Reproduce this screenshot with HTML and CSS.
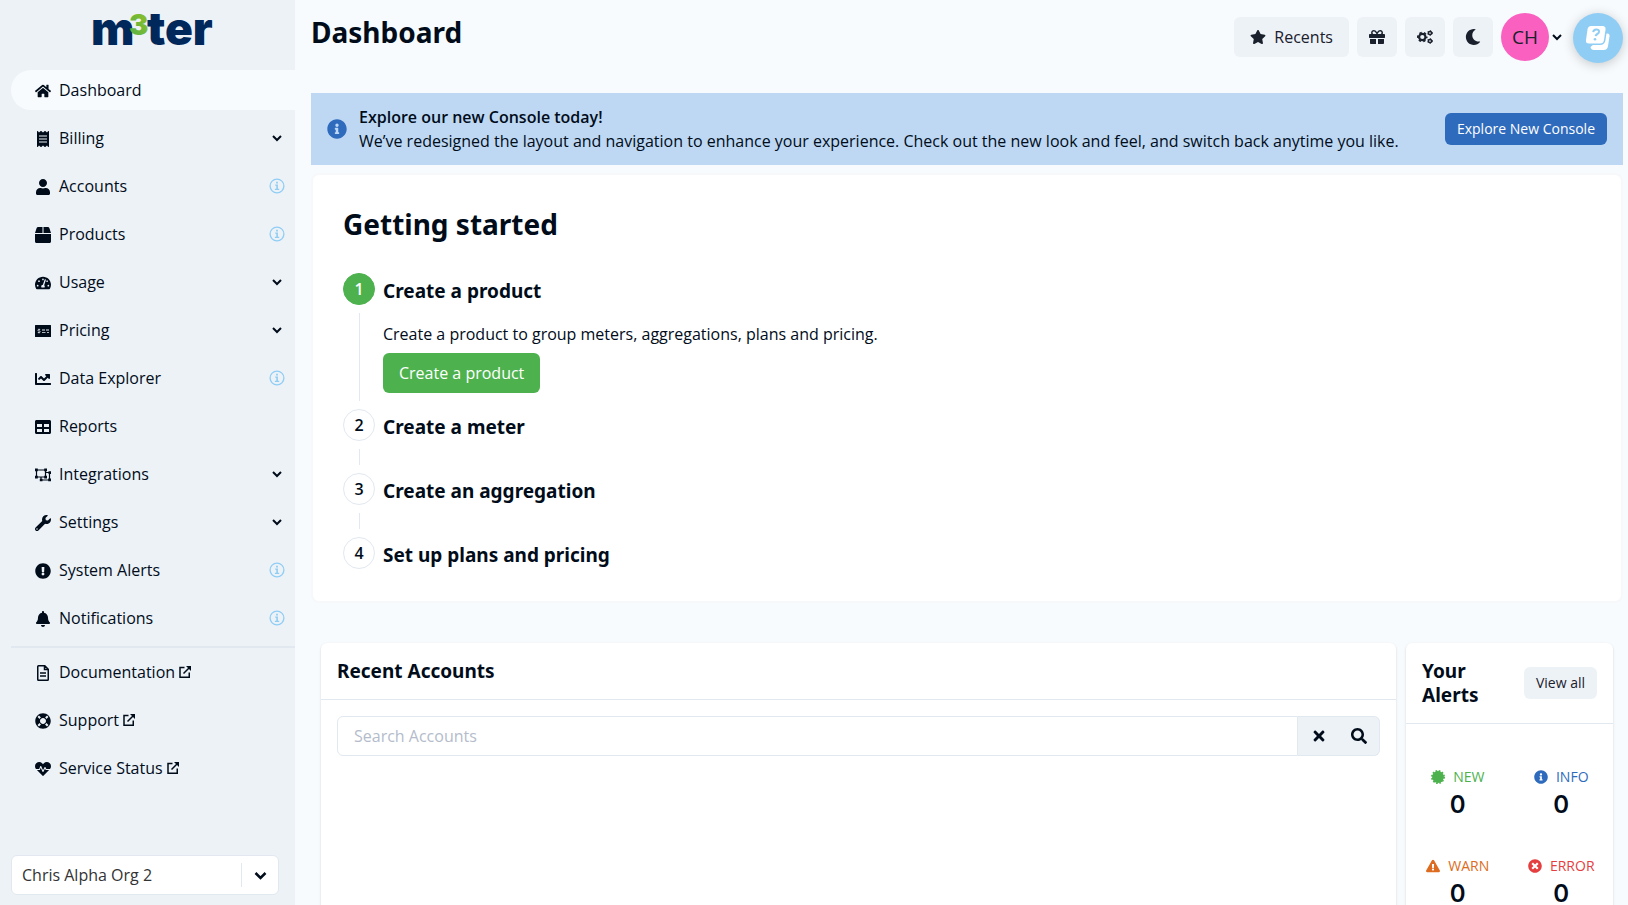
FILE: index.html
```html
<!DOCTYPE html>
<html lang="en">
<head>
<meta charset="utf-8">
<title>Dashboard</title>
<link rel="stylesheet" href="styles.css">
</head>
<body>
<svg class="sprite" aria-hidden="true">
  <symbol id="home" viewBox="0 0 576 512"><path d="M280.37 148.26L96 300.11V464a16 16 0 0 0 16 16l112.06-.29a16 16 0 0 0 15.92-16V368a16 16 0 0 1 16-16h64a16 16 0 0 1 16 16v95.64a16 16 0 0 0 16 16.05L464 480a16 16 0 0 0 16-16V300L295.67 148.26a12.19 12.19 0 0 0-15.3 0zM571.6 251.47L488 182.56V44.05a12 12 0 0 0-12-12h-56a12 12 0 0 0-12 12v72.61L318.47 43a48 48 0 0 0-61 0L4.34 251.47a12 12 0 0 0-1.6 16.9l25.5 31A12 12 0 0 0 45.15 301l235.22-193.74a12.19 12.19 0 0 1 15.3 0L530.9 301a12 12 0 0 0 16.9-1.6l25.5-31a12 12 0 0 0-1.7-16.93z"/></symbol>
  <symbol id="receipt" viewBox="0 0 384 512"><path d="M358.4 3.2L320 48 265.6 3.2a15.9 15.9 0 0 0-19.2 0L192 48 137.6 3.2a15.9 15.9 0 0 0-19.2 0L64 48 25.6 3.2C15-4.7 0 2.8 0 16v480c0 13.2 15 20.7 25.6 12.8L64 464l54.4 44.8a15.9 15.9 0 0 0 19.2 0L192 464l54.4 44.8a15.9 15.9 0 0 0 19.2 0L320 464l38.4 44.8c10.5 7.9 25.6.4 25.6-12.8V16c0-13.2-15-20.7-25.6-12.8zM320 360c0 4.4-3.6 8-8 8H72c-4.4 0-8-3.6-8-8v-16c0-4.4 3.6-8 8-8h240c4.4 0 8 3.6 8 8v16zm0-96c0 4.4-3.6 8-8 8H72c-4.4 0-8-3.6-8-8v-16c0-4.4 3.6-8 8-8h240c4.4 0 8 3.6 8 8v16zm0-96c0 4.4-3.6 8-8 8H72c-4.4 0-8-3.6-8-8v-16c0-4.4 3.6-8 8-8h240c4.4 0 8 3.6 8 8v16z"/></symbol>
  <symbol id="user" viewBox="0 0 448 512"><path d="M224 256c70.7 0 128-57.3 128-128S294.7 0 224 0 96 57.3 96 128s57.3 128 128 128zm89.6 32h-16.7c-22.2 10.2-46.9 16-72.9 16s-50.6-5.8-72.9-16h-16.7C60.2 288 0 348.2 0 422.4V464c0 26.5 21.5 48 48 48h352c26.5 0 48-21.5 48-48v-41.6c0-74.2-60.2-134.4-134.4-134.4z"/></symbol>
  <symbol id="box" viewBox="0 0 512 512"><path d="M509.5 184.6L458.9 32.8C452.4 13.2 434.1 0 413.4 0H272v192h238.7c-.4-2.5-.4-5-1.2-7.4zM240 0H98.6c-20.7 0-39 13.2-45.5 32.8L2.5 184.6c-.8 2.4-.8 4.9-1.2 7.4H240V0zM0 224v240c0 26.5 21.5 48 48 48h416c26.5 0 48-21.5 48-48V224H0z"/></symbol>
  <symbol id="gauge" viewBox="0 0 576 512"><path d="M288 32C128.94 32 0 160.94 0 320c0 52.8 14.25 102.26 39.06 144.8 5.61 9.62 16.3 15.2 27.44 15.2h443c11.14 0 21.83-5.58 27.44-15.2C561.75 422.26 576 372.8 576 320c0-159.06-128.94-288-288-288zm0 64c14.71 0 26.58 10.13 30.32 23.65-1.11 2.26-2.64 4.23-3.45 6.67l-9.22 27.67c-5.13 3.49-10.97 6.01-17.64 6.01-17.67 0-32-14.33-32-32S270.33 96 288 96zM96 384c-17.67 0-32-14.33-32-32s14.33-32 32-32 32 14.33 32 32-14.33 32-32 32zm48-160c-17.67 0-32-14.33-32-32s14.33-32 32-32 32 14.33 32 32-14.33 32-32 32zm246.77-72.41l-61.33 184C343.13 347.33 352 364.54 352 384c0 11.72-3.38 22.55-8.88 32H232.88c-5.5-9.45-8.88-20.28-8.88-32 0-33.94 26.5-61.43 59.9-63.59l61.34-184.01c4.17-12.56 17.73-19.45 30.36-15.17 12.57 4.19 19.35 17.79 15.17 30.36zm14.66 57.2l15.52-46.55c3.47-1.29 7.13-2.23 11.05-2.23 17.67 0 32 14.33 32 32s-14.33 32-32 32c-11.38-.01-20.89-6.28-26.57-15.22zM480 384c-17.67 0-32-14.33-32-32s14.33-32 32-32 32 14.33 32 32-14.33 32-32 32z"/></symbol>
  <symbol id="money" viewBox="0 0 16 16"><path fill-rule="evenodd" d="M.5 2h15q.5 0 .5.5v11q0 .5-.5.500H.5q-.5 0-.5-.5v-11q0-.5.5-.5zM7 6.500v1h3v-1zM11 6.500v1h3v-1zM7 9v.8h3.500V9zM12 9v.8h2V9z"/><path d="M5.200 6.600H3.600q-.7 0-.7.7t.7.700h.9q.7 0 .7.750t-.7.750H2.800M4 5.700v.900M4 9.500v.900" fill="none" stroke="#edf2f7" stroke-width=".8"/></symbol>
  <symbol id="chart" viewBox="0 0 512 512"><path d="M496 384H64V80c0-8.84-7.16-16-16-16H16C7.16 64 0 71.16 0 80v336c0 17.67 14.33 32 32 32h464c8.84 0 16-7.16 16-16v-32c0-8.84-7.16-16-16-16zM464 96H345.94c-21.38 0-32.09 25.85-16.97 40.97l32.4 32.4L288 242.75l-73.37-73.37c-12.5-12.5-32.76-12.5-45.25 0l-68.69 68.69c-6.25 6.25-6.25 16.38 0 22.63l22.62 22.62c6.25 6.25 16.38 6.25 22.63 0L192 237.25l73.37 73.37c12.5 12.5 32.76 12.5 45.25 0l96-96 32.4 32.4c15.12 15.12 40.97 4.41 40.97-16.97V112c.01-8.84-7.15-16-15.99-16z"/></symbol>
  <symbol id="table" viewBox="0 0 512 512"><path d="M464 32H48C21.49 32 0 53.49 0 80v352c0 26.51 21.49 48 48 48h416c26.51 0 48-21.49 48-48V80c0-26.51-21.49-48-48-48zM224 416H64v-96h160v96zm0-160H64v-96h160v96zm224 160H288v-96h160v96zm0-160H288v-96h160v96z"/></symbol>
  <symbol id="ungroup" viewBox="0 0 16 16"><path d="M1.500 3h9v7h-9zM11 5.500h3.500v7.500H6v-3" fill="none" stroke="currentColor" stroke-width="1.200"/><path d="M0 1.500h2.800v2.800H0zM9.200 1.500H12v2.800H9.200zM0 8.700h2.800v2.800H0zM9.200 8.700H12v2.800H9.200zM13.500 4.200H16V7h-2.500zM13.200 11.500H16v2.800h-2.800zM4.800 11.700h2.700v2.600H4.800z"/></symbol>
  <symbol id="wrench" viewBox="0 0 512 512"><path d="M507.73 109.1c-2.24-9.03-13.54-12.09-20.12-5.51l-74.36 74.36-67.88-11.31-11.31-67.88 74.36-74.36c6.62-6.62 3.43-17.9-5.66-20.16-47.38-11.74-99.55.91-136.58 37.93-39.64 39.64-50.55 97.1-34.05 147.2L18.74 402.76c-24.99 24.99-24.99 65.51 0 90.5 24.99 24.99 65.51 24.99 90.5 0l213.21-213.21c50.12 16.71 107.47 5.68 147.37-34.22 37.07-37.07 49.7-89.32 37.91-136.73zM64 472c-13.25 0-24-10.75-24-24 0-13.26 10.75-24 24-24s24 10.74 24 24c0 13.25-10.75 24-24 24z"/></symbol>
  <symbol id="alert" viewBox="0 0 512 512"><path d="M504 256c0 136.997-111.043 248-248 248S8 392.997 8 256C8 119.083 119.043 8 256 8s248 111.083 248 248zm-248 50c-25.405 0-46 20.595-46 46s20.595 46 46 46 46-20.595 46-46-20.595-46-46-46zm-43.673-165.346l7.418 136c.347 6.364 5.609 11.346 11.982 11.346h48.546c6.373 0 11.635-4.982 11.982-11.346l7.418-136c.375-6.874-5.098-12.654-11.982-12.654h-63.383c-6.884 0-12.356 5.78-11.981 12.654z"/></symbol>
  <symbol id="bell" viewBox="0 0 448 512"><path d="M224 512c35.32 0 63.97-28.65 63.97-64H160.03c0 35.35 28.65 64 63.97 64zm215.39-149.71c-19.32-20.76-55.47-51.99-55.47-154.29 0-77.7-54.48-139.9-127.94-155.16V32c0-17.67-14.32-32-31.98-32s-31.98 14.33-31.98 32v20.84C118.56 68.1 64.08 130.3 64.08 208c0 102.3-36.15 133.53-55.47 154.29-6 6.45-8.66 14.16-8.61 21.71.11 16.4 12.98 32 32.1 32h383.8c19.12 0 32-15.6 32.1-32 .05-7.55-2.61-15.27-8.61-21.71z"/></symbol>
  <symbol id="doc" viewBox="0 0 12 16"><path d="M1.500.75h6.300l3.450 3.450v10.300q0 .75-.75.750h-9q-.75 0-.75-.75V1.500q0-.75.750-.75zM7.500.75V4.500h3.750M3 8.100h6M3 11.100h6" fill="none" stroke="currentColor" stroke-width="1.500"/></symbol>
  <symbol id="ring" viewBox="0 0 512 512"><path d="M256 8C119.033 8 8 119.033 8 256s111.033 248 248 248 248-111.033 248-248S392.967 8 256 8zm173.696 119.559l-63.399 63.399c-10.987-18.559-26.67-34.252-45.255-45.255l63.399-63.399a218.396 218.396 0 0 1 45.255 45.255zM256 352c-53.019 0-96-42.981-96-96s42.981-96 96-96 96 42.981 96 96-42.981 96-96 96zM127.559 82.304l63.399 63.399c-18.559 10.987-34.252 26.67-45.255 45.255l-63.399-63.399a218.372 218.372 0 0 1 45.255-45.255zM82.304 384.441l63.399-63.399c10.987 18.559 26.67 34.252 45.255 45.255l-63.399 63.399a218.396 218.396 0 0 1-45.255-45.255zm302.137 45.255l-63.399-63.399c18.559-10.987 34.252-26.67 45.255-45.255l63.399 63.399a218.403 218.403 0 0 1-45.255 45.255z"/></symbol>
  <symbol id="heart" viewBox="0 0 512 512"><path d="M320.200 243.800l-49.700 99.400c-6 12.100-23.400 11.700-28.900-.6l-56.900-126.300-30 71.700H60.600l182.500 186.500c7.100 7.300 18.600 7.300 25.700 0L451.400 288H342.300l-22.100-44.200zM473.700 73.900l-2.400-2.500c-51.500-52.600-135.800-52.600-187.400 0L256 100l-27.900-28.500c-51.500-52.700-135.900-52.700-187.400 0l-2.400 2.400C-10.400 123.700-12.500 203 31 256h102.400l35.900-86.200c5.400-12.900 23.600-13.100 29.300-.4l58.200 129.300 49-97.900c5.900-11.800 22.700-11.800 28.600 0l27.600 55.200H481c43.500-53 41.400-132.300-7.300-182.100z"/></symbol>
  <symbol id="star" viewBox="0 0 576 512"><path d="M259.300 17.800L194 150.200 47.900 171.500c-26.200 3.800-36.700 36.100-17.700 54.600l105.700 103-25 145.500c-4.500 26.300 23.200 46 46.400 33.700L288 439.600l130.700 68.700c23.200 12.200 50.900-7.400 46.400-33.700l-25-145.500 105.700-103c19-18.500 8.500-50.800-17.700-54.600L382 150.200 316.700 17.800c-11.700-23.600-45.600-23.900-57.400 0z"/></symbol>
  <symbol id="gift" viewBox="0 0 512 512"><path d="M32 448c0 17.700 14.300 32 32 32h160V320H32v128zm256 32h160c17.700 0 32-14.300 32-32V320H288v160zm192-320h-42.100c6.200-12.100 10.100-25.500 10.100-40 0-48.500-39.500-88-88-88-41.600 0-68.500 21.300-103 68.300-34.500-47-61.400-68.300-103-68.300-48.500 0-88 39.500-88 88 0 14.500 3.800 27.900 10.100 40H32c-17.700 0-32 14.300-32 32v80c0 8.800 7.200 16 16 16h480c8.800 0 16-7.200 16-16v-80c0-17.700-14.300-32-32-32zm-326.100 0c-22.100 0-40-17.900-40-40s17.900-40 40-40c19.900 0 34.600 3.300 86.100 80h-86.100zm206.100 0h-86.100c51.400-76.500 65.700-80 86.100-80 22.100 0 40 17.900 40 40s-17.900 40-40 40z"/></symbol>
  <symbol id="cogs" viewBox="0 0 16 16"><g fill="none" stroke="currentColor"><circle cx="5.300" cy="8" r="3.200" stroke-width="2.200"/><circle cx="5.300" cy="8" r="4.500" stroke-width="1.600" stroke-dasharray="2.400 2.312" stroke-dashoffset="1.200"/><circle cx="13" cy="4" r="1.600" stroke-width="1.500"/><circle cx="13" cy="4" r="2.400" stroke-width="1" stroke-dasharray="1.250 1.263"/><circle cx="13" cy="12" r="1.600" stroke-width="1.500"/><circle cx="13" cy="12" r="2.400" stroke-width="1" stroke-dasharray="1.250 1.263"/></g></symbol>
  <symbol id="moon" viewBox="0 0 512 512"><path d="M283.211 512c78.962 0 151.079-35.925 198.857-94.792 7.068-8.708-.639-21.430-11.562-19.350-124.203 23.654-238.262-71.576-238.262-196.954 0-72.222 38.662-138.635 101.498-174.394 9.686-5.512 7.250-20.197-3.756-22.230A258.156 258.156 0 0 0 283.211 0c-141.309 0-256 114.511-256 256 0 141.309 114.511 256 256 256z"/></symbol>
  <symbol id="times" viewBox="0 0 352 512"><path d="M242.720 256l100.070-100.070c12.280-12.280 12.280-32.190 0-44.480l-22.240-22.240c-12.280-12.280-32.190-12.280-44.480 0L176 189.280 75.930 89.210c-12.280-12.280-32.190-12.280-44.480 0L9.210 111.450c-12.280 12.280-12.280 32.190 0 44.480L109.280 256 9.210 356.070c-12.280 12.280-12.280 32.190 0 44.480l22.240 22.240c12.280 12.280 32.200 12.280 44.480 0L176 322.720l100.070 100.070c12.280 12.280 32.200 12.280 44.480 0l22.240-22.240c12.280-12.280 12.280-32.190 0-44.480L242.720 256z"/></symbol>
  <symbol id="search" viewBox="0 0 512 512"><path d="M505 442.700L405.300 343c-4.500-4.500-10.600-7-17-7H372c27.600-35.300 44-79.700 44-128C416 93.100 322.900 0 208 0S0 93.100 0 208s93.100 208 208 208c48.300 0 92.700-16.400 128-44v16.300c0 6.400 2.500 12.500 7 17l99.700 99.700c9.400 9.400 24.600 9.400 33.900 0l28.300-28.300c9.400-9.400 9.400-24.600.1-34zM208 336c-70.700 0-128-57.200-128-128 0-70.700 57.200-128 128-128 70.700 0 128 57.200 128 128 0 70.700-57.200 128-128 128z"/></symbol>
  <symbol id="info" viewBox="0 0 512 512"><path d="M256 8C119.043 8 8 119.083 8 256c0 136.997 111.043 248 248 248s248-111.003 248-248C504 119.083 392.957 8 256 8zm0 110c23.196 0 42 18.804 42 42s-18.804 42-42 42-42-18.804-42-42 18.804-42 42-42zm56 254c0 6.627-5.373 12-12 12h-88c-6.627 0-12-5.373-12-12v-24c0-6.627 5.373-12 12-12h12v-64h-12c-6.627 0-12-5.373-12-12v-24c0-6.627 5.373-12 12-12h64c6.627 0 12 5.373 12 12v100h12c6.627 0 12 5.373 12 12v24z"/></symbol>
  <symbol id="warn" viewBox="0 0 576 512"><path d="M569.517 440.013C587.975 472.007 564.806 512 527.940 512H48.054c-36.937 0-59.999-40.055-41.577-71.987L246.423 23.985c18.467-32.009 64.720-31.951 83.154 0l239.940 416.028zM288 354c-25.405 0-46 20.595-46 46s20.595 46 46 46 46-20.595 46-46-20.595-46-46-46zm-43.673-165.346l7.418 136c.347 6.364 5.609 11.346 11.982 11.346h48.546c6.373 0 11.635-4.982 11.982-11.346l7.418-136c.375-6.874-5.098-12.654-11.982-12.654h-63.383c-6.884 0-12.356 5.780-11.981 12.654z"/></symbol>
  <symbol id="error" viewBox="0 0 512 512"><path d="M256 8C119 8 8 119 8 256s111 248 248 248 248-111 248-248S393 8 256 8zm121.600 313.100c4.700 4.700 4.700 12.300 0 17L338 377.600c-4.700 4.700-12.300 4.700-17 0L256 312l-65.100 65.600c-4.700 4.700-12.300 4.700-17 0L134.400 338c-4.700-4.700-4.700-12.300 0-17l65.600-65-65.600-65.100c-4.700-4.700-4.700-12.300 0-17l39.600-39.600c4.700-4.700 12.300-4.700 17 0l65 65.700 65.100-65.600c4.700-4.700 12.300-4.700 17 0l39.600 39.600c4.700 4.700 4.700 12.300 0 17L312 256l65.600 65.100z"/></symbol>
  <symbol id="badge" viewBox="0 0 16 16"><circle cx="8" cy="8" r="6.800"/><circle cx="8" cy="8" r="7" fill="none" stroke="currentColor" stroke-width="2" stroke-dasharray="1.900 1.765"/></symbol>
  <symbol id="down" viewBox="0 0 12 12"><path d="M2 4l4 4 4-4" fill="none" stroke="currentColor" stroke-width="2"/></symbol>
  <symbol id="hint" viewBox="0 0 16 16"><circle cx="8" cy="8" r="6.900" fill="none" stroke="currentColor" stroke-width="1.300"/><path d="M7.100 3.700h1.800v1.800H7.100zM6.200 6.500h2.700v4.300h1.300V12H5.900v-1.200h1.400V7.700H6.200z"/></symbol>
  <symbol id="ext" viewBox="0 0 12 12"><path d="M5.500 1.500H1v9.750h9.250V6.500M4.500 7.500l6-6" fill="none" stroke="currentColor" stroke-width="1.500"/><path d="M7 0h5v5z"/></symbol>
</svg>

<div class="app">
  <aside class="sidebar">
    <a class="logo" href="#" aria-label="m3ter">
      <svg width="124" height="70" viewBox="0 0 124 70">
        <defs><linearGradient id="leaf" x1="0" y1="1" x2="1" y2="0"><stop offset="0" stop-color="#4caf50"/><stop offset="1" stop-color="#97c11f"/></linearGradient></defs>
        <g class="logo-text">
          <text x="0" y="45" font-size="46" fill="#00285a">m</text>
          <text x="56" y="45" font-size="46" fill="#00285a">ter</text>
          <text x="38" y="35" font-size="29" fill="url(#leaf)">3</text>
        </g>
      </svg>
    </a>
    <nav class="nav">
      <a class="nav-item active" href="#"><svg class="icon"><use href="#home"/></svg>Dashboard</a>
      <a class="nav-item" href="#"><svg class="icon"><use href="#receipt"/></svg>Billing<svg class="end chevron"><use href="#down"/></svg></a>
      <a class="nav-item" href="#"><svg class="icon"><use href="#user"/></svg>Accounts<svg class="end hint"><use href="#hint"/></svg></a>
      <a class="nav-item" href="#"><svg class="icon"><use href="#box"/></svg>Products<svg class="end hint"><use href="#hint"/></svg></a>
      <a class="nav-item" href="#"><svg class="icon"><use href="#gauge"/></svg>Usage<svg class="end chevron"><use href="#down"/></svg></a>
      <a class="nav-item" href="#"><svg class="icon"><use href="#money"/></svg>Pricing<svg class="end chevron"><use href="#down"/></svg></a>
      <a class="nav-item" href="#"><svg class="icon"><use href="#chart"/></svg>Data Explorer<svg class="end hint"><use href="#hint"/></svg></a>
      <a class="nav-item" href="#"><svg class="icon"><use href="#table"/></svg>Reports</a>
      <a class="nav-item" href="#"><svg class="icon"><use href="#ungroup"/></svg>Integrations<svg class="end chevron"><use href="#down"/></svg></a>
      <a class="nav-item" href="#"><svg class="icon"><use href="#wrench"/></svg>Settings<svg class="end chevron"><use href="#down"/></svg></a>
      <a class="nav-item" href="#"><svg class="icon"><use href="#alert"/></svg>System Alerts<svg class="end hint"><use href="#hint"/></svg></a>
      <a class="nav-item" href="#"><svg class="icon"><use href="#bell"/></svg>Notifications<svg class="end hint"><use href="#hint"/></svg></a>
    </nav>
    <nav class="nav nav-links">
      <a class="nav-item" href="#"><svg class="icon"><use href="#doc"/></svg><span>Documentation <svg class="ext"><use href="#ext"/></svg></span></a>
      <a class="nav-item" href="#"><svg class="icon"><use href="#ring"/></svg><span>Support <svg class="ext"><use href="#ext"/></svg></span></a>
      <a class="nav-item" href="#"><svg class="icon"><use href="#heart"/></svg><span>Service Status <svg class="ext"><use href="#ext"/></svg></span></a>
    </nav>
    <div class="org">
      <select class="org-select" aria-label="Organization"><option>Chris Alpha Org 2</option></select>
      <span class="org-mark"><svg><use href="#down"/></svg></span>
    </div>
  </aside>

  <main class="main">
    <header class="header">
      <h1 class="title">Dashboard</h1>
      <div class="actions">
        <button class="btn recents" type="button"><svg class="icon"><use href="#star"/></svg>Recents</button>
        <button class="btn square" type="button" aria-label="What's new"><svg class="icon"><use href="#gift"/></svg></button>
        <button class="btn square" type="button" aria-label="Preferences"><svg class="icon"><use href="#cogs"/></svg></button>
        <button class="btn square" type="button" aria-label="Dark mode"><svg class="icon"><use href="#moon"/></svg></button>
        <button class="account" type="button"><span class="avatar">CH</span><svg><use href="#down"/></svg></button>
      </div>
      <button class="help" type="button" aria-label="Help">
        <svg width="26" height="26" viewBox="0 0 26 26">
          <path d="M21.500 8.500q3.500-.5 3 3l-1.500 9.500q-.5 4-4.500 4H9q-3 0-3.500-3" fill="#fff"/>
          <path d="M6 1h11.500q3.500 0 3 3.500L19 15q-.5 3.500-4 3.500H4Q.5 18.500 1 15L2.500 4.500Q3 1 6 1z" fill="#fff" stroke="#90cdf4" stroke-width="3" paint-order="stroke"/>
          <path d="M8.200 7.200q.3-2.700 3.100-2.700 2.900 0 2.700 2.300-.2 1.500-1.700 2.200-1.500.8-1.700 2.200" fill="none" stroke="#90cdf4" stroke-width="2"/>
          <circle cx="10" cy="14.200" r="1.300" fill="#90cdf4"/>
        </svg>
      </button>
    </header>

    <section class="banner">
      <svg class="banner-icon"><use href="#info"/></svg>
      <div class="banner-text"><strong>Explore our new Console today!</strong><p>We’ve redesigned the layout and navigation to enhance your experience. Check out the new look and feel, and switch back anytime you like.</p></div>
      <button class="btn primary" type="button">Explore New Console</button>
    </section>

    <section class="started">
      <h2 class="title">Getting started</h2>
      <ol class="steps">
        <li class="step current"><span class="marker"><b>1</b></span><div><h3 class="subtitle">Create a product</h3><p>Create a product to group meters, aggregations, plans and pricing.</p><button class="btn create" type="button">Create a product</button></div></li>
        <li class="step"><span class="marker"><b>2</b></span><h3 class="subtitle">Create a meter</h3></li>
        <li class="step"><span class="marker"><b>3</b></span><h3 class="subtitle">Create an aggregation</h3></li>
        <li class="step"><span class="marker"><b>4</b></span><h3 class="subtitle">Set up plans and pricing</h3></li>
      </ol>
    </section>

    <div class="widgets">
      <section class="card">
        <header class="card-head"><h3 class="subtitle">Recent Accounts</h3></header>
        <form class="search">
          <input type="text" placeholder="Search Accounts" aria-label="Search Accounts">
          <button type="button" aria-label="Clear"><svg class="icon"><use href="#times"/></svg></button>
          <button type="button" aria-label="Search"><svg class="icon"><use href="#search"/></svg></button>
        </form>
      </section>
      <section class="card">
        <header class="card-head"><h3 class="subtitle">Your Alerts</h3><button class="btn small" type="button">View all</button></header>
        <dl class="alerts">
          <div class="alert new"><dt><svg><use href="#badge"/></svg>NEW</dt><dd>0</dd></div>
          <div class="alert info"><dt><svg><use href="#info"/></svg>INFO</dt><dd>0</dd></div>
          <div class="alert warn"><dt><svg><use href="#warn"/></svg>WARN</dt><dd>0</dd></div>
          <div class="alert error"><dt><svg><use href="#error"/></svg>ERROR</dt><dd>0</dd></div>
        </dl>
      </section>
    </div>
  </main>
</div>
</body>
</html>
```
FILE: styles.css
```css
* { box-sizing: border-box; margin: 0; padding: 0; }

body {
  background: #f7fafc;
  color: #000c1a;
  font: 16px/24px "Open Sans", "Noto Sans", sans-serif;
}

button, input, select { font: inherit; color: inherit; }
button { border: 0; cursor: pointer; }
a { color: inherit; text-decoration: none; }
svg { fill: currentColor; flex: none; }

.sprite { position: absolute; width: 0; height: 0; }
.icon { width: 16px; height: 16px; }

.app { display: flex; height: 100vh; }

/* Sidebar */
.sidebar {
  display: flex;
  flex-direction: column;
  flex: none;
  width: 295px;
  padding: 0 0 10px 11px;
  background: #edf2f7;
}
.logo { display: flex; justify-content: center; height: 70px; }
.logo-text { font-family: Inter, sans-serif; font-weight: 900; }
.nav { display: flex; flex-direction: column; gap: 8px; padding-bottom: 8px; }
.nav-item {
  display: flex;
  align-items: center;
  gap: 8px;
  height: 40px;
  padding: 0 10px 0 24px;
  border-radius: 20px 0 0 20px;
}
.nav-item .icon { margin-top: 2px; }
.nav-item.active { background: #f7fbfe; }
.end { width: 16px; height: 16px; margin-left: auto; }
.chevron { width: 12px; height: 12px; margin-right: 2px; }
.hint { color: #90cdf4; }
.ext { width: 12px; height: 12px; }
.nav-links { padding-top: 4px; border-top: 2px solid #e2e8f0; }

.org { position: relative; margin: auto 16px 0 0; }
.org-select {
  display: block;
  width: 100%;
  height: 40px;
  padding: 0 48px 0 10px;
  appearance: none;
  border: 1px solid #e2e8f0;
  border-radius: 6px;
  background: #fff;
  color: #333;
}
.org-mark {
  position: absolute;
  top: 8px;
  right: 0;
  bottom: 8px;
  display: grid;
  place-items: center;
  width: 38px;
  border-left: 1px solid #e2e8f0;
  pointer-events: none;
}
.org-mark svg { width: 15px; height: 15px; }

/* Main column */
.main {
  flex: 1;
  min-width: 0;
  padding: 13px 5px 0 16px;
  overflow-y: auto;
  scrollbar-width: none;
  background: #f7fbfe;
}
.title { font: bold 28px/40px "Noto Sans", sans-serif; }
.subtitle { font: bold 19px/24px "Noto Sans", sans-serif; }

.header { display: flex; align-items: flex-start; margin-bottom: 30px; }
.header .title { line-height: 38px; }
.actions { display: flex; align-items: center; gap: 8px; margin-left: auto; }

.btn {
  display: inline-flex;
  align-items: center;
  justify-content: center;
  height: 40px;
  padding: 0 16px;
  border-radius: 6px;
  background: #edf2f7;
  color: #1a202c;
  white-space: nowrap;
}
.btn.square { width: 40px; padding: 0; }
.btn.recents { gap: 8px; }
.btn.small, .btn.primary { height: 32px; padding: 0 12px; font-size: 14px; }
.btn.primary { background: #2f6bbd; color: #fff; }
.btn.create { background: #4db24e; color: #fff; }

.account { display: flex; align-items: center; gap: 2px; background: none; }
.account svg { width: 12px; height: 12px; }
.avatar {
  display: grid;
  place-items: center;
  width: 48px;
  height: 48px;
  border-radius: 50%;
  background: #f960c0;
  color: #1a202c;
  font-size: 19px;
}
.help {
  display: grid;
  place-items: center;
  width: 50px;
  height: 50px;
  margin-left: 10px;
  border-radius: 50%;
  background: #90cdf4;
  box-shadow: 0 2px 12px rgba(0, 0, 0, .2);
}

.banner {
  display: flex;
  align-items: center;
  gap: 12px;
  padding: 12px 16px;
  background: #bed8f3;
}
.banner-icon { width: 20px; height: 20px; color: #2f6bbd; }
.banner-text { flex: 1; }
.banner strong { font-weight: 600; }

.started {
  margin-top: 8px;
  padding: 29px 30px 32px;
  border: 2px solid #f6f8fa;
  border-radius: 8px;
  background: #fff;
}
.steps { margin-top: 29px; list-style: none; }
.step { display: flex; gap: 8px; min-height: 64px; }
.marker { display: flex; flex-direction: column; align-items: center; gap: 8px; width: 32px; padding-bottom: 8px; }
.marker b {
  display: grid;
  flex: none;
  place-items: center;
  width: 32px;
  height: 32px;
  border: 1px solid #e2e8f0;
  border-radius: 50%;
  font-weight: 600;
}
.marker::after { content: ""; flex: 1; width: 1px; background: #e2e8f0; }
.step:last-child { min-height: 32px; }
.step:last-child .marker { padding: 0; }
.step:last-child .marker::after { content: none; }
.current b { border-color: #4db24e; background: #4db24e; color: #fff; }
.step .subtitle { padding-top: 6px; height: 32px; }
.step p { margin: 17px 0 7px; }
.step .create { margin-bottom: 16px; }

/* Widgets */
.widgets { display: grid; grid-template-columns: 5fr 1fr; margin-top: 35px; padding: 0 5px; }
.card {
  min-height: 400px;
  margin: 5px;
  border-radius: 6px;
  background: #fff;
  box-shadow: 0 1px 3px rgba(0, 0, 0, .1), 0 1px 2px rgba(0, 0, 0, .06);
}
.card-head {
  display: flex;
  align-items: center;
  justify-content: space-between;
  gap: 8px;
  padding: 16px;
  border-bottom: 1px solid #e2e8f0;
}
.search { display: flex; padding: 16px; }
.search input {
  flex: 1;
  min-width: 0;
  height: 40px;
  padding: 0 16px;
  border: 1px solid #e2e8f0;
  border-radius: 6px 0 0 6px;
  background: #fff;
}
.search input::placeholder { color: #b4bccb; }
.search button {
  display: grid;
  place-items: center;
  width: 41px;
  background: #edf2f7;
  border: 1px solid #e2e8f0;
  border-left: 0;
}
.search button:last-child { border-radius: 0 6px 6px 0; }
.search button:nth-child(2) { border-right: 0; }

.alerts { display: grid; grid-template-columns: 1fr 1fr; padding-top: 26px; }
.alert { padding: 16px 0; text-align: center; }
.alert dt { display: flex; align-items: center; justify-content: center; gap: 8px; font-size: 14px; line-height: 21px; }
.alert svg { width: 14px; height: 14px; }
.alert dd { font: 600 24px/36px Inter, sans-serif; }
.new dt { color: #4db24e; }
.info dt { color: #2f6bbd; }
.warn dt { color: #dd6b20; }
.error dt { color: #e53e3e; }
```
